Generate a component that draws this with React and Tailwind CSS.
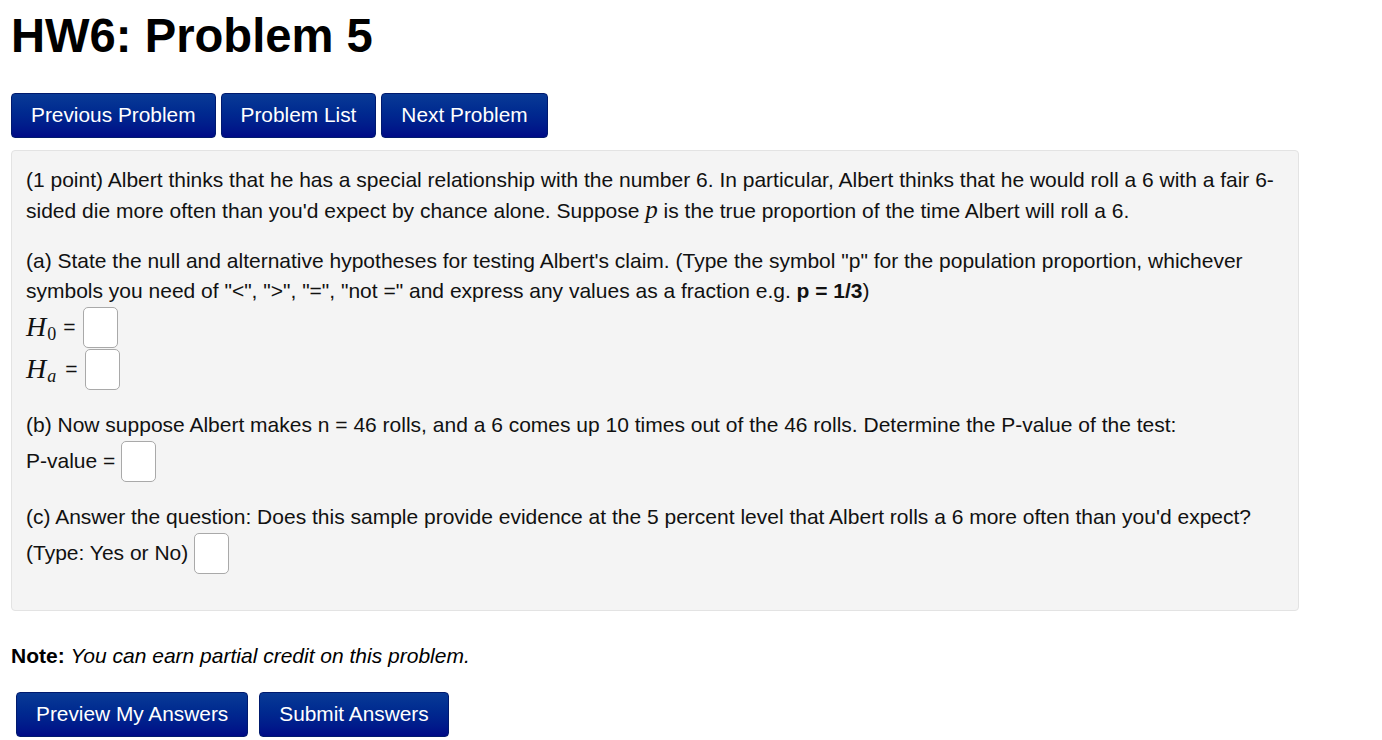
import React from 'react';

function NavButton({ children }) {
  return (
    <button className="h-[45px] rounded-[4px] border border-[#001a6e] bg-gradient-to-b from-[#0a3a96] to-[#000a87] px-[19px] text-[20.85px] leading-none text-white">
      {children}
    </button>
  );
}

function AnswerBox() {
  return <span className="inline-block h-[41px] w-[35px] rounded-[5px] border border-[#a9a9a9] bg-white align-middle" />;
}

function MathVar({ base, sub, subItalic }) {
  return (
    <span className="font-['Liberation_Serif',serif] text-[28px] leading-none">
      <i>{base}</i>
      <sub className={'relative top-[4px] ml-[1px] text-[18px] ' + (subItalic ? 'italic' : '')}>{sub}</sub>
    </span>
  );
}

export default function App() {
  return (
    <div className="min-h-screen bg-white px-[11px] font-['Liberation_Sans',Arial,sans-serif] text-black">
      <h1 className="pt-[12px] text-[47.2px] font-bold leading-[47px]">HW6: Problem 5</h1>

      <div className="mt-[34px] flex gap-[5px]">
        <NavButton>Previous Problem</NavButton>
        <NavButton>Problem List</NavButton>
        <NavButton>Next Problem</NavButton>
      </div>

      <div className="mt-[12px] w-[1288px] rounded-[4px] border border-[#e3e3e3] bg-[#f4f4f4] px-[14px] pt-[14px] pb-[36px] text-[21px] leading-[30px] text-[#111]">
        <p>
          (1 point) Albert thinks that he has a special relationship with the number 6. In particular, Albert thinks that he would roll a 6 with a fair 6-sided die more often than you'd expect by chance alone. Suppose{' '}
          <i className="font-['Liberation_Serif',serif] text-[25px]">p</i> is the true proportion of the time Albert will roll a 6.
        </p>

        <p className="mt-[20px]">
          (a) State the null and alternative hypotheses for testing Albert's claim. (Type the symbol "p" for the population proportion, whichever symbols you need of "&lt;", "&gt;", "=", "not =" and express any values as a fraction e.g. <b>p = 1/3</b>)
        </p>
        <div className="flex h-[42px] items-center">
          <MathVar base="H" sub="0" />
          <span className="ml-[7px] mr-[7px]">=</span>
          <AnswerBox />
        </div>
        <div className="flex h-[42px] items-center">
          <MathVar base="H" sub="a" subItalic />
          <span className="ml-[9px] mr-[7px]">=</span>
          <AnswerBox />
        </div>

        <p className="mt-[20px]">
          (b) Now suppose Albert makes n = 46 rolls, and a 6 comes up 10 times out of the 46 rolls. Determine the P-value of the test:
        </p>
        <div className="flex h-[42px] items-center">
          <span className="mr-[6px]">P-value =</span>
          <AnswerBox />
        </div>

        <p className="mt-[20px]">
          (c) Answer the question: Does this sample provide evidence at the 5 percent level that Albert rolls a 6 more often than you'd expect?
        </p>
        <div className="flex h-[42px] items-center">
          <span className="mr-[6px]">(Type: Yes or No)</span>
          <AnswerBox />
        </div>
      </div>

      <p className="mt-[30px] text-[21px] leading-[30px]">
        <b>Note:</b> <i>You can earn partial credit on this problem.</i>
      </p>

      <div className="mt-[21px] flex gap-[11px] pl-[5px]">
        <NavButton>Preview My Answers</NavButton>
        <NavButton>Submit Answers</NavButton>
      </div>
    </div>
  );
}
